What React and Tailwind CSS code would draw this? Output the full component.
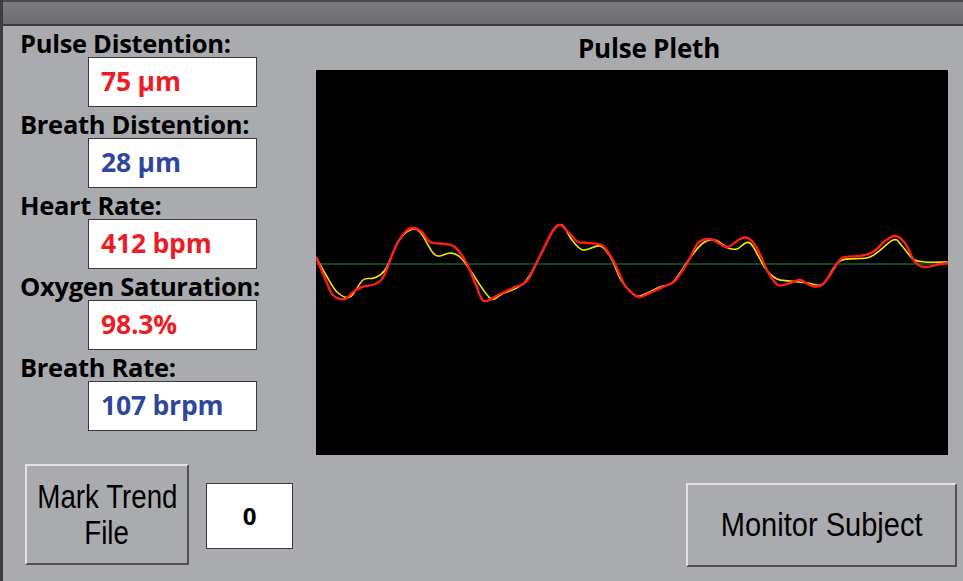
import React from "react";

const OX = 316;
const OY = 70;

const RED = [
  [316, 257], [324, 276], [333, 295], [345, 299], [353, 292], [362, 287], [375, 284], [384, 276],
  [395, 248], [405, 232], [413, 228], [422, 232], [430, 242], [445, 244], [455, 247], [466, 262],
  [476, 285], [484, 301], [500, 294], [515, 287], [527, 281], [540, 256], [552, 232], [560, 225],
  [570, 234], [578, 242], [590, 243], [603, 246], [614, 262], [624, 284], [632, 293], [640, 297],
  [652, 292], [665, 286], [675, 281], [688, 262], [698, 243], [710, 239], [720, 244], [728, 247],
  [740, 239], [748, 238], [757, 248], [768, 272], [778, 285], [790, 283], [800, 280], [812, 286],
  [822, 285], [832, 272], [842, 258], [860, 256], [873, 252], [885, 241], [895, 236], [905, 243],
  [915, 262], [925, 267], [940, 264], [948, 263],
];

const YELLOW = [
  [316, 257], [326, 275], [337, 292], [350, 297], [363, 280], [374, 278], [385, 270], [398, 242],
  [410, 230], [420, 232], [433, 253], [440, 256], [450, 253], [460, 257], [470, 270], [490, 298],
  [502, 294], [524, 283], [540, 256], [553, 231], [562, 225], [572, 240], [583, 250], [600, 246],
  [611, 258], [621, 280], [632, 293], [640, 296], [660, 287], [673, 282], [690, 258], [703, 243],
  [715, 240], [728, 248], [737, 249], [750, 243], [765, 268], [777, 279], [790, 281], [808, 283],
  [823, 284], [840, 261], [870, 257], [893, 240], [902, 246], [913, 259], [925, 262], [948, 262],
];

// catmull-rom -> cubic bezier
const smooth = (pts) => {
  const p = pts.map(([x, y]) => [x - OX, y - OY]);
  let d = `M${p[0][0]},${p[0][1]}`;
  for (let i = 0; i < p.length - 1; i++) {
    const p0 = p[i - 1] || p[i];
    const p1 = p[i];
    const p2 = p[i + 1];
    const p3 = p[i + 2] || p2;
    const c1x = p1[0] + (p2[0] - p0[0]) / 6;
    const c1y = p1[1] + (p2[1] - p0[1]) / 6;
    const c2x = p2[0] - (p3[0] - p1[0]) / 6;
    const c2y = p2[1] - (p3[1] - p1[1]) / 6;
    d += ` C${c1x.toFixed(1)},${c1y.toFixed(1)} ${c2x.toFixed(1)},${c2y.toFixed(1)} ${p2[0]},${p2[1]}`;
  }
  return d;
};

const readings = [
  { label: "Pulse Distention:", value: "75 µm", color: "text-[#ec1c24]" },
  { label: "Breath Distention:", value: "28 µm", color: "text-[#2e479c]" },
  { label: "Heart Rate:", value: "412 bpm", color: "text-[#ec1c24]" },
  { label: "Oxygen Saturation:", value: "98.3%", color: "text-[#ec1c24]" },
  { label: "Breath Rate:", value: "107 brpm", color: "text-[#2e479c]" },
];

const Reading = ({ label, value, color }) => (
  <div className="flex flex-col">
    <div className="h-[26px] text-[25.5px] leading-[26px] font-bold text-black whitespace-nowrap tracking-[-0.3px]">
      {label}
    </div>
    <div className="ml-[68px] mt-[1px] w-[169px] h-[50px] bg-white border border-[#3a3a3a] flex items-center pl-[12px]">
      <span className={`text-[26.5px] font-bold tracking-[-0.2px] ${color}`}>{value}</span>
    </div>
  </div>
);

const narrow = { fontFamily: "'Liberation Sans', Arial, sans-serif" };

const App = () => {
  return (
    <div
      className="w-[963px] h-[581px] bg-[#aaabaf] border-l-[3px] border-[#3d3d40] flex flex-col overflow-hidden"
      style={{ fontFamily: "'Open Sans', Lato, sans-serif" }}
    >
      {/* title bar */}
      <div className="h-[26px] shrink-0 border-t-2 border-b-2 border-t-[#4a4a4c] border-b-[#3a3a3c] bg-gradient-to-b from-[#7c7c80] to-[#6d6d71]" />

      <div className="flex">
        {/* readings */}
        <div className="w-[313px] pl-[17px] pt-[4px] flex flex-col gap-[4px]">
          {readings.map((r) => (
            <Reading key={r.label} {...r} />
          ))}
        </div>

        {/* pleth */}
        <div className="w-[632px] flex flex-col">
          <div className="h-[44px] flex items-center justify-center pl-[34px] pt-[1px] text-[26px] font-bold text-black tracking-[-0.2px]">
            Pulse Pleth
          </div>
          <div className="h-[385px] bg-black">
            <svg width="632" height="385" viewBox="0 0 632 385">
              <line x1="0" y1="194" x2="632" y2="194" stroke="#1c8a48" strokeWidth="1.2" />
              <path d={smooth(YELLOW)} fill="none" stroke="#f4e800" strokeWidth="1.6" />
              <path d={smooth(RED)} fill="none" stroke="#ff1c1c" strokeWidth="2.4" />
            </svg>
          </div>
        </div>
      </div>

      {/* bottom controls */}
      <div className="flex items-start mt-[9px]">
        <button className="ml-[22px] w-[164px] h-[101px] bg-[#aaabaf] border-2 border-t-[#e2e2e4] border-l-[#e2e2e4] border-b-[#505052] border-r-[#505052] text-black flex flex-col items-center justify-center">
          <span className="inline-block scale-x-[0.84] text-[33px] leading-[36px] whitespace-nowrap" style={narrow}>
            Mark Trend
          </span>
          <span className="inline-block scale-x-[0.84] text-[33px] leading-[36px] whitespace-nowrap" style={narrow}>
            File
          </span>
        </button>
        <div className="ml-[17px] mt-[19px] w-[87px] h-[66px] bg-white border border-[#3a3a3a] flex items-center justify-center text-[24px] font-bold text-black">
          0
        </div>
        <button className="ml-auto mr-[6px] mt-[19px] w-[271px] h-[84px] bg-[#aaabaf] border-2 border-t-[#e2e2e4] border-l-[#e2e2e4] border-b-[#505052] border-r-[#505052] text-black flex items-center justify-center">
          <span className="inline-block scale-x-[0.88] text-[33px] whitespace-nowrap" style={narrow}>
            Monitor Subject
          </span>
        </button>
      </div>
    </div>
  );
};

export default App;
